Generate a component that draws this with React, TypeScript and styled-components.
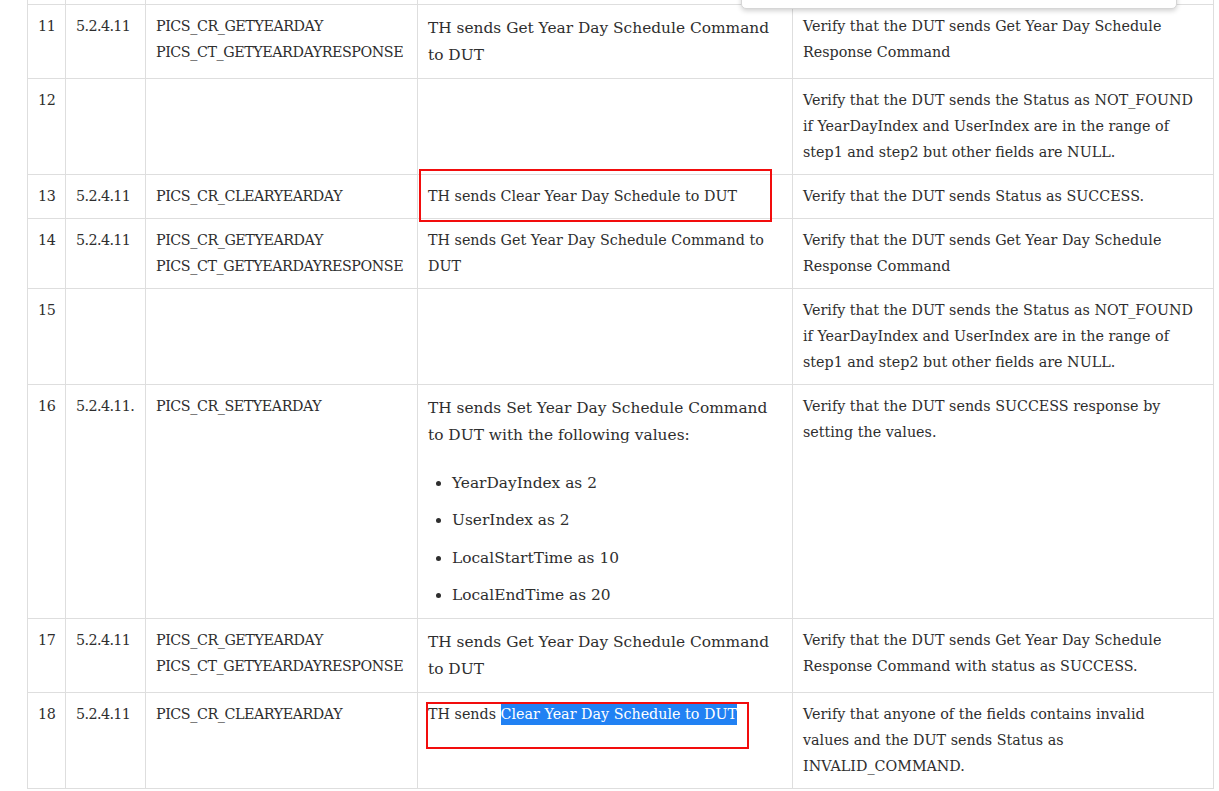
import styled, { createGlobalStyle } from "styled-components";

const GlobalStyle = createGlobalStyle`
  html, body {
    margin: 0;
    padding: 0;
    background: #fff;
  }
  body {
    font-family: "DejaVu Serif", "Liberation Serif", serif;
    color: #303030;
  }
`;

const Page = styled.div`
  position: relative;
  padding-left: 27px;
  width: 1219px;
  box-sizing: border-box;
  overflow: hidden;
`;

const Popover = styled.div`
  position: absolute;
  left: 741px;
  top: -12px;
  width: 434px;
  height: 19px;
  background: #fff;
  border: 1px solid #d6d6d6;
  border-radius: 5px;
  box-shadow: 0 2px 5px rgba(0, 0, 0, 0.18);
  z-index: 2;
`;

const StepTable = styled.table`
  border-collapse: collapse;
  table-layout: fixed;
  width: 1187px;
  font-size: 14.3px;
  line-height: 26px;
  color: #2e2e2e;
`;

const CutRow = styled.tr`
  td {
    height: 4px;
    padding: 0;
    border-left: 1px solid #dedede;
    border-right: 1px solid #dedede;
    border-bottom: 1px solid #dedede;
  }
`;

const Cell = styled.td<{ $tight?: number }>`
  position: relative;
  vertical-align: top;
  padding: 8px 10px 9px;
  border: 1px solid #dedede;
  white-space: ${(p) => (p.$tight !== undefined ? "nowrap" : "normal")};
  letter-spacing: ${(p) => p.$tight ?? 0}px;
`;

const Para = styled.p`
  margin: 2px 0 0;
  font-size: 15.4px;
  line-height: 27px;
`;

const ValueList = styled.ul`
  margin: 20.5px 0 0;
  padding-left: 24px;
  display: flex;
  flex-direction: column;
  gap: 10.67px;
  font-size: 15.4px;
  line-height: 27px;
`;

const Selected = styled.span`
  background: #2181f3;
  color: #fff;
  padding: 3px 0;
`;

const Marker = styled.div<{ $left: number; $top: number; $w: number; $h: number }>`
  position: absolute;
  left: ${(p) => p.$left}px;
  top: ${(p) => p.$top}px;
  width: ${(p) => p.$w}px;
  height: ${(p) => p.$h}px;
  box-sizing: border-box;
  border: 2px solid #f20d0d;
  pointer-events: none;
`;

type Step = {
  n: string;
  section?: string;
  pics?: string[];
  action?: React.ReactNode;
  expected: React.ReactNode;
};

const notFound =
  "Verify that the DUT sends the Status as NOT_FOUND if YearDayIndex and UserIndex are in the range of step1 and step2 but other fields are NULL.";

const steps: Step[] = [
  {
    n: "11",
    section: "5.2.4.11",
    pics: ["PICS_CR_GETYEARDAY", "PICS_CT_GETYEARDAYRESPONSE"],
    action: <Para>TH sends Get Year Day Schedule Command to DUT</Para>,
    expected: "Verify that the DUT sends Get Year Day Schedule Response Command",
  },
  { n: "12", expected: notFound },
  {
    n: "13",
    section: "5.2.4.11",
    pics: ["PICS_CR_CLEARYEARDAY"],
    action: (
      <>
        TH sends Clear Year Day Schedule to DUT
        <Marker $left={1} $top={-6} $w={353} $h={53} />
      </>
    ),
    expected: "Verify that the DUT sends Status as SUCCESS.",
  },
  {
    n: "14",
    section: "5.2.4.11",
    pics: ["PICS_CR_GETYEARDAY", "PICS_CT_GETYEARDAYRESPONSE"],
    action: "TH sends Get Year Day Schedule Command to DUT",
    expected: "Verify that the DUT sends Get Year Day Schedule Response Command",
  },
  { n: "15", expected: notFound },
  {
    n: "16",
    section: "5.2.4.11.",
    pics: ["PICS_CR_SETYEARDAY"],
    action: (
      <>
        <Para>TH sends Set Year Day Schedule Command to DUT with the following values:</Para>
        <ValueList>
          <li>YearDayIndex as 2</li>
          <li>UserIndex as 2</li>
          <li>LocalStartTime as 10</li>
          <li>LocalEndTime as 20</li>
        </ValueList>
      </>
    ),
    expected: "Verify that the DUT sends SUCCESS response by setting the values.",
  },
  {
    n: "17",
    section: "5.2.4.11",
    pics: ["PICS_CR_GETYEARDAY", "PICS_CT_GETYEARDAYRESPONSE"],
    action: <Para>TH sends Get Year Day Schedule Command to DUT</Para>,
    expected:
      "Verify that the DUT sends Get Year Day Schedule Response Command with status as SUCCESS.",
  },
  {
    n: "18",
    section: "5.2.4.11",
    pics: ["PICS_CR_CLEARYEARDAY"],
    action: (
      <>
        TH sends <Selected>Clear Year Day Schedule to DUT</Selected>
        <Marker $left={8} $top={9} $w={323} $h={47} />
      </>
    ),
    expected: (
      <>
        Verify that anyone of the fields contains invalid
        <br />
        values and the DUT sends Status as INVALID_COMMAND.
      </>
    ),
  },
];

export default function App() {
  return (
    <Page>
      <GlobalStyle />
      <Popover />
      <StepTable>
        <colgroup>
          <col style={{ width: 38 }} />
          <col style={{ width: 80 }} />
          <col style={{ width: 272 }} />
          <col style={{ width: 375 }} />
          <col style={{ width: 421 }} />
        </colgroup>
        <tbody>
          <CutRow>
            <td />
            <td />
            <td />
            <td />
            <td />
          </CutRow>
          {steps.map((s) => (
            <tr key={s.n}>
              <Cell $tight={-0.4}>{s.n}</Cell>
              <Cell $tight={-0.6}>{s.section}</Cell>
              <Cell $tight={-0.45}>
                {s.pics?.map((p) => (
                  <div key={p}>{p}</div>
                ))}
              </Cell>
              <Cell>{s.action}</Cell>
              <Cell>{s.expected}</Cell>
            </tr>
          ))}
        </tbody>
      </StepTable>
    </Page>
  );
}
